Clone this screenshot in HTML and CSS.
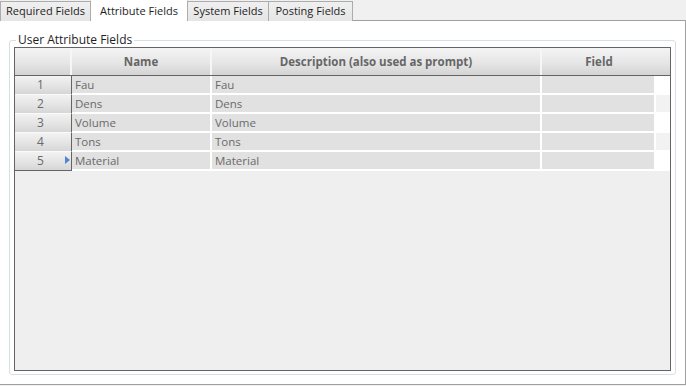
FILE: index.html
```html
<!DOCTYPE html>
<html lang="en">
<head>
  <meta charset="UTF-8" />
  <title>Attribute Fields</title>
  <link rel="stylesheet" href="styles.css">
</head>
<body>

  <div class="tabs">
    <div class="tab tab-required">Required Fields</div>
    <div class="tab tab-attr active">Attribute Fields</div>
    <div class="tab tab-system">System Fields</div>
    <div class="tab tab-posting">Posting Fields</div>
  </div>

  <div class="panel">
    <fieldset class="group">
      <legend>User Attribute Fields</legend>
      <div class="grid">
        <div class="row head">
          <div class="corner"></div>
          <div class="hcell">Name</div>
          <div class="hcell">Description (also used as prompt)</div>
          <div class="hcell last">Field</div>
          <div class="hcell end"></div>
        </div>
        <div class="row">
          <div class="rhead">1</div>
          <div class="cell">Fau</div>
          <div class="cell">Fau</div>
          <div class="cell"></div>
          <div class="cell extra"></div>
        </div>
        <div class="row alt">
          <div class="rhead">2</div>
          <div class="cell">Dens</div>
          <div class="cell">Dens</div>
          <div class="cell"></div>
          <div class="cell extra"></div>
        </div>
        <div class="row">
          <div class="rhead">3</div>
          <div class="cell">Volume</div>
          <div class="cell">Volume</div>
          <div class="cell"></div>
          <div class="cell extra"></div>
        </div>
        <div class="row alt">
          <div class="rhead">4</div>
          <div class="cell">Tons</div>
          <div class="cell">Tons</div>
          <div class="cell"></div>
          <div class="cell extra"></div>
        </div>
        <div class="row current">
          <div class="rhead">5</div>
          <div class="cell">Material</div>
          <div class="cell">Material</div>
          <div class="cell"></div>
          <div class="cell extra"></div>
        </div>
      </div>
    </fieldset>
  </div>

</body>
</html>
```

FILE: styles.css
```css
* {
  box-sizing: border-box;
}
body {
  margin: 0;
  background: #f0f0f0;
  font-family: "Open Sans", "Noto Sans", sans-serif;
  font-size: 11px;
  color: #1e1e1e;
}

/* tab strip */
.tabs {
  display: flex;
  align-items: flex-start;
  height: 21px;
  position: relative;
  z-index: 2;
}
.tab {
  height: 20px;
  margin-top: 1px;
  margin-right: -1px;
  border: 1px solid #acacac;
  border-bottom: none;
  background: linear-gradient(#f0f0f0, #e5e5e5);
  text-align: center;
  line-height: 17px;
  white-space: nowrap;
}
.tab.active {
  height: 21px;
  margin-top: 0;
  background: #fff;
  border-color: #fff;
  border-left-color: #acacac;
  border-right-color: #acacac;
  position: relative;
  z-index: 3;
  line-height: 19px;
}
.tab-required { width: 91px; }
.tab-attr { width: 98px; }
.tab-system { width: 82px; }
.tab-posting { width: 85px; }

/* page */
.panel {
  margin: -1px 0 0 -1px;
  width: 687px;
  height: 365px;
  border: 1px solid #a0a0a0;
  background: #fff;
  padding: 12px 9px 9px 9px;
  display: flex;
  flex-direction: column;
}
.group {
  margin: 0;
  flex: 1;
  min-width: 0;
  border: 1px solid #d5dfe5;
  border-radius: 3px;
  padding: 0 4px 3px 4px;
  display: flex;
  flex-direction: column;
}
.group legend {
  padding: 0 2px;
  margin-left: 2px;
  line-height: 14px;
  font-size: 12px;
}

/* data grid */
.grid {
  flex: 1;
  border: 1px solid #646464;
  background: #efefef;
  color: #6a6a6a;
  font-size: 11.5px;
}
.row {
  display: grid;
  grid-template-columns: 57px 140px 330px 114px 1fr;
  height: 19px;
}
.row.head {
  height: 28px;
  border-bottom: 1px solid #646464;
}
.corner, .hcell {
  background: linear-gradient(#f4f4f4, #e6e6e6 55%, #d4d4d4);
}
.corner {
  border-right: 2px solid #f6f6f6;
}
.hcell {
  border-right: 2px solid #f6f6f6;
  text-align: center;
  font-weight: bold;
  line-height: 27px;
  color: #666;
}
.hcell.last, .hcell.end {
  border-right: none;
}
.rhead {
  position: relative;
  background: linear-gradient(#f2f2f2, #e4e4e4 55%, #d6d6d6);
  border-right: 1px solid #646464;
  border-bottom: 1px solid #fafafa;
  text-align: center;
  padding-right: 5px;
  line-height: 18px;
  font-size: 12px;
}
.row.current .rhead {
  border-bottom-color: #646464;
}
.row.current .rhead::after {
  content: "";
  position: absolute;
  right: 1px;
  top: 4px;
  border-style: solid;
  border-width: 4.5px 0 4.5px 5px;
  border-color: transparent transparent transparent #4f86d3;
}
.cell {
  background: #e1e1e1;
  border-right: 2px solid #fff;
  border-bottom: 2px solid #fff;
  padding-left: 3px;
  line-height: 17px;
  white-space: nowrap;
  overflow: hidden;
}
.cell.extra {
  background: #fff;
  border-right: none;
}
.row.alt .cell.extra {
  background: #f2f2f2;
}
```
